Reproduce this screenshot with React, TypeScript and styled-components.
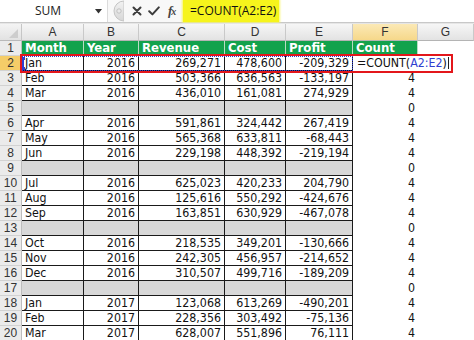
import React from "react";
import styled, { createGlobalStyle, css } from "styled-components";

const Global = createGlobalStyle`
  html, body { margin: 0; padding: 0; background: #fff; }
  body { width: 474px; height: 340px; overflow: hidden; }
`;

const COLS = "22px 62px 55px 86px 61px 67px 65px 1fr";
const SHEET_FONT = `"DejaVu Sans Condensed", "DejaVu Sans", Verdana, sans-serif`;
const UI_FONT = `"Open Sans", "Noto Sans", "Liberation Sans", sans-serif`;
const HEAD_FONT = `"Liberation Sans", Arial, sans-serif`;

const Window = styled.div`
  width: 474px;
  height: 340px;
  overflow: hidden;
  background: #fff;
`;

const FormulaBar = styled.div`
  display: flex;
  height: 22px;
  border-bottom: 1px solid #c8c8c8;
  box-sizing: content-box;
  background: #fff;
  font-family: ${UI_FONT};
`;

const NameBox = styled.div`
  width: 108px;
  display: flex;
  align-items: center;
  justify-content: space-between;
  padding: 0 4px 0 35px;
  box-sizing: border-box;
  font-size: 12px;
  line-height: 16px;
  color: #222;
  border-right: 1px solid #dcdcdc;
`;

const Tools = styled.div`
  width: 75px;
  display: flex;
  align-items: center;
  background: #f8f8f8;
`;

const ToolIcon = styled.span<{ $gap: number }>`
  display: flex;
  align-items: center;
  margin-left: ${(p) => p.$gap}px;
`;

const Fx = styled.span`
  font-family: "Liberation Serif", "DejaVu Serif", serif;
  font-style: italic;
  font-weight: bold;
  font-size: 13px;
  line-height: 16px;
  color: #444;
  margin-left: 8px;
  letter-spacing: -1px;
  & small { font-size: 10px; }
`;

const FormulaArea = styled.div`
  flex: 1;
  display: flex;
`;

const Highlight = styled.div`
  width: 96px;
  background: #f6f41c;
  box-shadow: 0 0 2px 1px #f8f66a;
  padding-left: 7px;
  box-sizing: border-box;
  line-height: 22px;
  font-size: 12px;
  color: #111;
  white-space: nowrap;
`;

const Sheet = styled.div`
  position: relative;
  border-top: 1px solid #e6e6e6;
  font-family: ${SHEET_FONT};
  font-stretch: condensed;
  font-size: 12.3px;
  color: #111;
`;

const Row = styled.div<{ $h: number }>`
  display: grid;
  grid-template-columns: ${COLS};
  height: ${(p) => p.$h}px;
`;

const headBase = css`
  box-sizing: border-box;
  display: flex;
  align-items: center;
  justify-content: center;
  font-family: ${HEAD_FONT};
  font-size: 12px;
  line-height: 13px;
  color: #333;
`;

const Corner = styled.div`
  ${headBase};
  position: relative;
  background: linear-gradient(#f4f4f4, #e2e2e2);
  border-right: 1px solid #c6c6c6;
  border-bottom: 1px solid #b9b9b9;
  &::after {
    content: "";
    position: absolute;
    right: 3px;
    bottom: 2px;
    border-left: 9px solid transparent;
    border-bottom: 9px solid #cdcdcd;
  }
`;

const ColHead = styled.div<{ $active?: boolean }>`
  ${headBase};
  padding-top: 1px;
  background: ${(p) =>
    p.$active ? "linear-gradient(#fbe9b6, #f6d88a)" : "linear-gradient(#f6f6f6, #e3e3e3)"};
  border-right: 1px solid #c9c9c9;
  border-bottom: 1px solid #b4b4b4;
`;

const RowHead = styled.div<{ $active?: boolean }>`
  ${headBase};
  background: ${(p) => (p.$active ? "#f5cd68" : "#ebebeb")};
  border-right: 1px solid #bdbdbd;
  border-bottom: 1px solid #d2d2d2;
`;

const TitleCell = styled.div`
  box-sizing: border-box;
  background: #12a24c;
  color: #fff;
  font-weight: bold;
  font-size: 13px;
  line-height: 14px;
  padding: 0 3px;
  white-space: nowrap;
  border-right: 1px solid #b9dcc4;
  border-bottom: 1px solid #222;
`;

const DataCell = styled.div<{ $blank?: boolean; $right?: boolean }>`
  box-sizing: border-box;
  background: ${(p) => (p.$blank ? "#d8d8d8" : "#fff")};
  line-height: 14px;
  padding: 0 3px;
  text-align: ${(p) => (p.$right ? "right" : "left")};
  white-space: nowrap;
  border-right: 1px solid #1a1a1a;
  border-bottom: 1px solid #1a1a1a;
`;

const PlainCell = styled.div<{ $right?: boolean }>`
  box-sizing: border-box;
  line-height: 14px;
  padding: 0 3px;
  text-align: ${(p) => (p.$right ? "right" : "left")};
  white-space: nowrap;
`;

const EditCell = styled.div`
  box-sizing: border-box;
  line-height: 14px;
  padding-left: 4px;
  white-space: nowrap;
  overflow: visible;
  position: relative;
  z-index: 1;
  & b { font-weight: normal; color: #2f3fd0; }
`;

const Caret = styled.span`
  display: inline-block;
  width: 1px;
  height: 12px;
  background: #222;
  vertical-align: -2px;
  margin-left: 1px;
`;

const RangeBox = styled.div`
  position: absolute;
  left: 22px;
  top: 32px;
  width: 331px;
  height: 15px;
  box-sizing: border-box;
  border: 1px dotted #2f3fd0;
  border-left: 2px solid #2f3fd0;
  z-index: 2;
  &::before,
  &::after {
    content: "";
    position: absolute;
    left: -2px;
    width: 3px;
    height: 3px;
    background: #2f3fd0;
  }
  &::before { top: 0; }
  &::after { bottom: 0; }
`;

const RedBox = styled.div`
  position: absolute;
  left: 20px;
  top: 30px;
  width: 433px;
  height: 19px;
  box-sizing: border-box;
  border: 2.5px solid #e3161b;
  z-index: 3;
`;

type Rec = [string, string, string, string, string] | null;

const DATA: Rec[] = [
  ["Jan", "2016", "269,271", "478,600", "-209,329"],
  ["Feb", "2016", "503,366", "636,563", "-133,197"],
  ["Mar", "2016", "436,010", "161,081", "274,929"],
  null,
  ["Apr", "2016", "591,861", "324,442", "267,419"],
  ["May", "2016", "565,368", "633,811", "-68,443"],
  ["Jun", "2016", "229,198", "448,392", "-219,194"],
  null,
  ["Jul", "2016", "625,023", "420,233", "204,790"],
  ["Aug", "2016", "125,616", "550,292", "-424,676"],
  ["Sep", "2016", "163,851", "630,929", "-467,078"],
  null,
  ["Oct", "2016", "218,535", "349,201", "-130,666"],
  ["Nov", "2016", "242,305", "456,957", "-214,652"],
  ["Dec", "2016", "310,507", "499,716", "-189,209"],
  null,
  ["Jan", "2017", "123,068", "613,269", "-490,201"],
  ["Feb", "2017", "228,356", "303,492", "-75,136"],
  ["Mar", "2017", "628,007", "551,896", "76,111"],
];

const TITLES = ["Month", "Year", "Revenue", "Cost", "Profit", "Count"];
const LETTERS = ["A", "B", "C", "D", "E", "F", "G"];

const DropArrow = () => (
  <svg width="8" height="5" viewBox="0 0 8 5">
    <path d="M0 0 H7 L3.5 4.5 Z" fill="#333" />
  </svg>
);

const Grip = () => (
  <svg width="15" height="22" viewBox="0 0 15 22">
    <defs>
      <linearGradient id="gg" x1="0" y1="0" x2="0" y2="1">
        <stop offset="0" stopColor="#f2f2f2" />
        <stop offset="1" stopColor="#d6d6d6" />
      </linearGradient>
    </defs>
    <path d="M15 1 A10 10 0 0 0 15 21 Z" fill="url(#gg)" stroke="#c4c4c4" strokeWidth="1" />
    <circle cx="10" cy="11" r="2.2" fill="#e9e9e9" stroke="#b8b8b8" strokeWidth="0.8" />
  </svg>
);

const XIcon = () => (
  <svg width="10" height="10" viewBox="0 0 10 10">
    <path d="M1.5 1.5 L8.5 8.5 M8.5 1.5 L1.5 8.5" stroke="#3c3c3c" strokeWidth="2" strokeLinecap="round" />
  </svg>
);

const CheckIcon = () => (
  <svg width="12" height="10" viewBox="0 0 12 10">
    <path d="M1.2 5.2 L4.4 8.4 L10.8 1.4" stroke="#3c3c3c" strokeWidth="2" fill="none" strokeLinecap="round" strokeLinejoin="round" />
  </svg>
);

export default function App() {
  return (
    <Window>
      <Global />
      <FormulaBar>
        <NameBox>
          <span>SUM</span>
          <DropArrow />
        </NameBox>
        <Tools>
          <ToolIcon $gap={1}>
            <Grip />
          </ToolIcon>
          <ToolIcon $gap={8}>
            <XIcon />
          </ToolIcon>
          <ToolIcon $gap={6}>
            <CheckIcon />
          </ToolIcon>
          <Fx>
            f<small>x</small>
          </Fx>
        </Tools>
        <FormulaArea>
          <Highlight>=COUNT(A2:E2)</Highlight>
        </FormulaArea>
      </FormulaBar>

      <Sheet>
        <Row $h={17}>
          <Corner />
          {LETTERS.map((l) => (
            <ColHead key={l} $active={l === "F"}>
              {l}
            </ColHead>
          ))}
        </Row>

        <Row $h={15}>
          <RowHead>1</RowHead>
          {TITLES.map((t) => (
            <TitleCell key={t}>{t}</TitleCell>
          ))}
          <PlainCell />
        </Row>

        {DATA.map((rec, i) => {
          const n = i + 2;
          return (
            <Row $h={15} key={n}>
              <RowHead $active={n === 2}>{n}</RowHead>
              {rec ? (
                rec.map((v, j) => (
                  <DataCell key={j} $right={j > 0}>
                    {v}
                  </DataCell>
                ))
              ) : (
                [0, 1, 2, 3, 4].map((j) => <DataCell key={j} $blank />)
              )}
              {n === 2 ? (
                <EditCell>
                  =COUNT(<b>A2:E2</b>)<Caret />
                </EditCell>
              ) : (
                <PlainCell $right>{rec ? "4" : "0"}</PlainCell>
              )}
              <PlainCell />
            </Row>
          );
        })}

        <RangeBox />
        <RedBox />
      </Sheet>
    </Window>
  );
}
